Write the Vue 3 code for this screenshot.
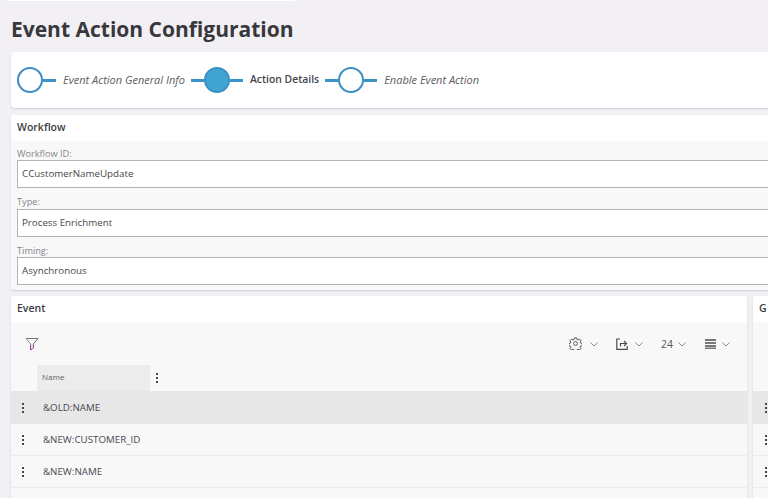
<script setup>
const fields = [
  { label: 'Workflow ID:', value: 'CCustomerNameUpdate' },
  { label: 'Type:', value: 'Process Enrichment' },
  { label: 'Timing:', value: 'Asynchronous' },
]
const steps = [
  { label: 'Event Action General Info', active: false },
  { label: 'Action Details', active: true },
  { label: 'Enable Event Action', active: false },
]
const rows = ['&OLD:NAME', '&NEW:CUSTOMER_ID', '&NEW:NAME']
</script>

<template>
  <div class="page">
    <div class="topbar"></div>
    <h1 class="title">Event Action Configuration</h1>

    <section class="card stepper">
      <div v-for="s in steps" :key="s.label" class="step">
        <span class="line" :class="{ hidden: s.label === steps[0].label }"></span>
        <span class="dot" :class="{ filled: s.active }"></span>
        <span class="line"></span>
        <span class="step-label" :class="{ current: s.active }">{{ s.label }}</span>
      </div>
    </section>

    <section class="card workflow">
      <header class="card-head">Workflow</header>
      <div class="form">
        <div v-for="f in fields" :key="f.label" class="field">
          <label class="field-label">{{ f.label }}</label>
          <div class="input">{{ f.value }}</div>
        </div>
      </div>
    </section>

    <div class="panels">
      <section class="card event">
        <header class="card-head">Event</header>
        <div class="grid-body">
          <div class="toolbar">
            <svg class="filter" width="14" height="14" viewBox="0 0 14 14" fill="none">
              <path d="M1 1.500h12L8.400 7v2" stroke="#77777f" stroke-width="1"/>
              <path d="M1 1.500 5.600 7v6" stroke="#8a8a92" stroke-width="1"/>
              <path d="M5.600 8v5l2.800-2V8" stroke="#a03a90" stroke-width="1"/>
            </svg>
            <div class="tools">
              <div class="tool gear">
                <svg width="13" height="13" viewBox="0 0 24 24" fill="none" stroke="#55555c" stroke-width="1.800" stroke-linejoin="round">
                  <circle cx="12" cy="12" r="3.500"/>
                  <path d="M10 1.500h4l.7 3.100 2 .9 2.700-1.700 2.800 2.800-1.700 2.700.9 2 3.100.7v4l-3.100.7-.9 2 1.700 2.700-2.800 2.800-2.700-1.700-2 .9-.7 3.100h-4l-.7-3.100-2-.9-2.700 1.700-2.800-2.800 1.700-2.700-.9-2-3.100-.7v-4l3.100-.7.9-2-1.700-2.700 2.800-2.800 2.700 1.700 2-.9z"/>
                </svg>
                <svg class="chev" width="8" height="5" viewBox="0 0 8 5" fill="none"><path d="M.5.500 4 4 7.500.500" stroke="#8c8c92"/></svg>
              </div>
              <div class="tool share">
                <svg width="12" height="12" viewBox="0 0 12 12" fill="none" stroke="#4a4a50" stroke-width="1.200">
                  <path d="M4 1H.8v10.300h10.400V8"/>
                  <path d="M4.500 8.500V5.500h6"/>
                  <path d="M8 3 10.500 5.500 8 8"/>
                </svg>
                <svg class="chev" width="8" height="5" viewBox="0 0 8 5" fill="none"><path d="M.5.500 4 4 7.500.500" stroke="#8c8c92"/></svg>
              </div>
              <div class="tool count">
                <span>24</span>
                <svg class="chev" width="8" height="5" viewBox="0 0 8 5" fill="none"><path d="M.5.500 4 4 7.500.500" stroke="#8c8c92"/></svg>
              </div>
              <div class="tool density">
                <svg width="11" height="10" viewBox="0 0 11 10" fill="#77777c">
                  <rect y="0" width="11" height="2"/><rect y="3" width="11" height="2"/><rect y="6" width="11" height="2"/><rect y="8.500" width="11" height="1.500"/>
                </svg>
                <svg class="chev" width="8" height="5" viewBox="0 0 8 5" fill="none"><path d="M.5.500 4 4 7.500.500" stroke="#8c8c92"/></svg>
              </div>
            </div>
          </div>
          <div class="grid-head">
            <div class="col-name">Name</div>
            <div class="kebab head-kebab"><i></i><i></i><i></i></div>
          </div>
          <div v-for="(r, i) in rows" :key="r" class="row" :class="{ selected: i === 0 }">
            <div class="kebab"><i></i><i></i><i></i></div>
            <span class="row-text">{{ r }}</span>
          </div>
        </div>
      </section>

      <section class="card second">
        <header class="card-head">G</header>
        <div class="grid-body">
          <div class="spacer"></div>
          <div v-for="(r, i) in rows" :key="r" class="row" :class="{ selected: i === 0 }">
            <div class="kebab"><i></i><i></i><i></i></div>
          </div>
        </div>
      </section>
    </div>
  </div>
</template>

<style>
html, body { margin: 0; background: #f2f0f4; overflow: hidden; }
</style>

<style scoped>
.page {
  width: 768px;
  height: 498px;
  box-sizing: border-box;
  overflow: hidden;
  padding-left: 11px;
  background: #f2f0f4;
  font-family: "Open Sans", sans-serif;
  color: #3d3d42;
}
.topbar {
  height: 1px;
  width: 287px;
  margin-left: -3px;
  background: #fff;
}
.title {
  margin: 0;
  height: 51px;
  line-height: 57px;
  font-size: 21px;
  font-weight: 700;
  color: #38383c;
  white-space: nowrap;
}
.card {
  background: #fff;
  border-radius: 4px;
  box-shadow: 0 1px 2px rgba(0, 0, 0, .14);
}
.stepper {
  width: 780px;
  height: 56px;
  display: flex;
  align-items: center;
  padding-left: 6px;
  box-sizing: border-box;
}
.step { display: flex; align-items: center; }
.line { width: 13px; height: 3px; background: #3b93c7; }
.line.hidden { display: none; }
.dot {
  width: 26px;
  height: 26px;
  box-sizing: border-box;
  border: 2px solid #3b8fc4;
  border-radius: 50%;
  background: #fff;
}
.dot.filled { background: #41a5d3; }
.step-label {
  font-size: 11px;
  font-style: italic;
  color: #5c5c62;
  margin: -2px 6px 0 7px;
  white-space: nowrap;
}
.step-label.current {
  font-style: normal;
  font-size: 10.400px;
  font-weight: 600;
  color: #45454a;
}
.workflow {
  width: 780px;
  margin-top: 7px;
  height: 175px;
  overflow: hidden;
}
.card-head {
  height: 26px;
  line-height: 25px;
  padding-left: 6px;
  font-size: 10.500px;
  font-weight: 600;
  color: #3d3d42;
  background: #fff;
}
.form {
  height: 149px;
  padding-left: 6px;
  padding-top: 1px;
  box-sizing: border-box;
  background: #f8f8f8;
}
.field-label {
  display: block;
  height: 18px;
  line-height: 23px;
  font-size: 9.200px;
  color: #87878c;
}
.field:nth-child(2) .field-label { height: 21px; line-height: 27px; }
.field:nth-child(3) .field-label { height: 20px; line-height: 27px; }
.input {
  height: 28px;
  box-sizing: border-box;
  border: 1px solid #b4b4b8;
  background: #fff;
  line-height: 25px;
  padding-left: 4px;
  font-size: 9.750px;
  color: #47474c;
}
.panels {
  display: flex;
  gap: 6px;
  margin-top: 6px;
  width: 780px;
}
.event { width: 736px; flex: none; height: 230px; overflow: hidden; }
.second { flex: 1; height: 230px; overflow: hidden; }
.grid-body { background: #f8f8f8; height: 204px; }
.toolbar {
  height: 43px;
  display: flex;
  align-items: center;
  justify-content: space-between;
  padding-right: 17px;
}
.filter { margin-left: 14px; }
.tools { display: flex; align-items: center; }
.tool { display: flex; align-items: center; }
.chev { margin-left: 6px; margin-top: 1px; }
.gear { margin-right: 18px; }
.gear .chev { margin-left: 8px; }
.share { margin-right: 18px; }
.share .chev { margin-left: 7px; }
.count { margin-right: 19px; font-size: 10.500px; color: #55555a; }
.count .chev { margin-left: 5px; }
.grid-head { display: flex; height: 26px; padding-left: 26px; }
.col-name {
  width: 113px;
  background: #ececec;
  font-size: 8px;
  line-height: 24px;
  padding-left: 5px;
  box-sizing: border-box;
  color: #5f5f64;
}
.kebab {
  display: flex;
  flex-direction: column;
  justify-content: center;
  gap: 2px;
  width: 2px;
}
.kebab i { width: 2px; height: 2px; background: #45454a; }
.head-kebab { margin-left: 6px; }
.row {
  display: flex;
  align-items: center;
  height: 32px;
  border-bottom: 1px solid #ebebeb;
  box-sizing: border-box;
  padding-left: 11px;
}
.row.selected { height: 33px; background: #e7e7e7; border-bottom: none; }
.row-text {
  margin-left: 19px;
  font-size: 9.750px;
  color: #4a4a50;
}
.row.selected .row-text { margin-top: -1px; }
.second .row { padding-left: 12px; }
.spacer { height: 69px; }
</style>
